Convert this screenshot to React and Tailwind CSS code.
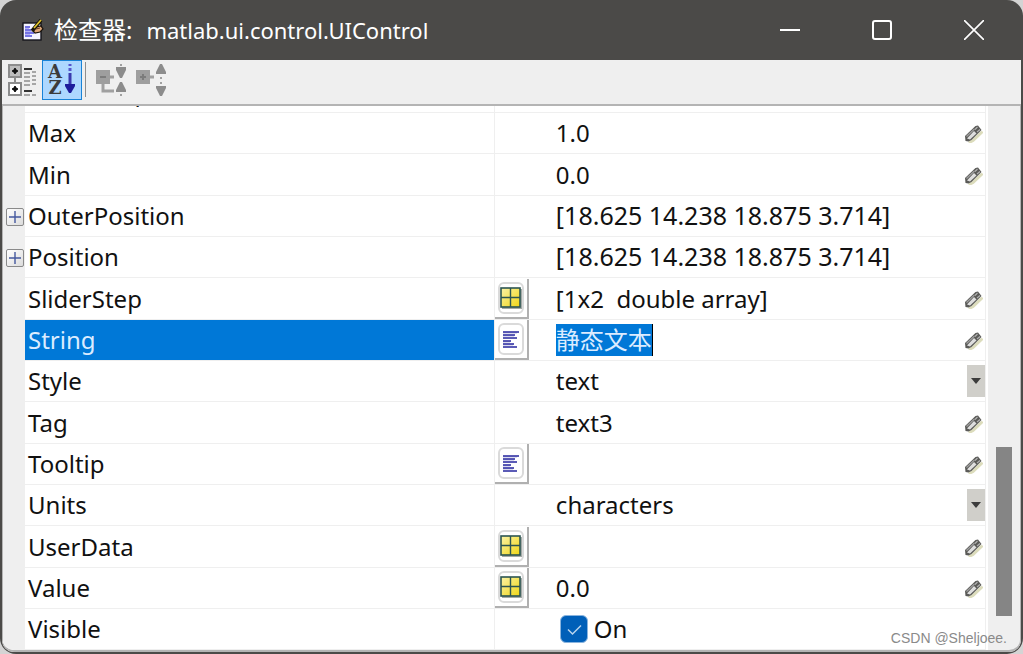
import React, { useState } from "react";

const properties = [
  { name: "ListboxTop", value: "1.0", action: "edit" },
  { name: "Max", value: "1.0", action: "edit" },
  { name: "Min", value: "0.0", action: "edit" },
  { name: "OuterPosition", value: "[18.625 14.238 18.875 3.714]", expand: true },
  { name: "Position", value: "[18.625 14.238 18.875 3.714]", expand: true },
  { name: "SliderStep", value: "[1x2  double array]", editor: "grid", action: "edit" },
  { name: "String", value: "静态文本", type: "text", editor: "lines", action: "edit" },
  { name: "Style", value: "text", type: "select", options: ["text", "edit", "pushbutton"] },
  { name: "Tag", value: "text3", action: "edit" },
  { name: "Tooltip", value: "", editor: "lines", action: "edit" },
  { name: "Units", value: "characters", type: "select", options: ["characters", "pixels", "normalized"] },
  { name: "UserData", value: "", editor: "grid", action: "edit" },
  { name: "Value", value: "0.0", editor: "grid", action: "edit" },
  { name: "Visible", type: "checkbox" },
];

// icons

const AppIcon = () => (
  <svg width="22" height="23" viewBox="0 0 22 23">
    <rect x="1" y="4" width="18" height="17" fill="#f4f4ff" stroke="#15151c" strokeWidth="1.4" />
    <path d="M3 8h5M3 11h6M3 14h9M3 17h7" stroke="#4a48dc" strokeWidth="1.6" />
    <path d="M3 9.5h4M3 12.5h7M3 15.5h5" stroke="#b4b2f4" strokeWidth="1" />
    <path d="M11 12l3-4 5-1 2 3-3 3-5 1z" fill="#e0a878" stroke="#1a130c" strokeWidth="1.2" />
    <path d="M10 12L19 1" stroke="#191508" strokeWidth="3.6" />
    <path d="M12 9L19 1" stroke="#e3c52c" strokeWidth="1.6" />
    <path d="M14 10l4-1" stroke="#6b3f20" strokeWidth="1.2" />
  </svg>
);

const CategoryIcon = () => (
  <svg width="30" height="34" viewBox="0 0 30 34">
    <path d="M7 14v5" stroke="#8c8c8c" strokeWidth="2" />
    <rect x="1" y="1" width="12" height="12" fill="#bdbdbd" stroke="#8c8c8c" strokeWidth="2" />
    <rect x="1" y="19" width="12" height="12" fill="#fff" stroke="#8c8c8c" strokeWidth="2" />
    <path d="M7 4v6M4 7h6M7 22v6M4 25h6" stroke="#444" strokeWidth="2" />
    <path d="M4 7l3-3 3 3-3 3zM4 25l3-3 3 3-3 3z" fill="#111" />
    <path d="M16 5h8M16 27h8" stroke="#333" strokeWidth="2" />
    <path
      d="M16 9h6M16 13h6M16 17h6M16 21h6M16 31h6M24 8h4M24 12h4M24 16h4M24 20h4M24 31h4"
      stroke="#a6a6a6"
      strokeWidth="2"
    />
  </svg>
);

const SortArrow = () => (
  <svg width="12" height="34" viewBox="0 0 12 34">
    <path d="M6 1v2M6 5v3" stroke="#5656cc" strokeWidth="3" />
    <path d="M6 10v12" stroke="#3a3aae" strokeWidth="3" />
    <path d="M1 21h10v2l-4 7h-2l-4-7z" fill="#1d1d9c" />
  </svg>
);

const CollapseIcon = () => (
  <svg width="32" height="34" viewBox="0 0 32 34">
    <rect x="0" y="6" width="14" height="14" fill="#9e9e9e" />
    <path d="M4 13h6" stroke="#7c7c7c" strokeWidth="2" />
    <path d="M14 13h4M7 20v7h11" fill="none" stroke="#a0a0a0" strokeWidth="3" />
    <path d="M25 0v2M25 30v2" stroke="#a0a0a0" strokeWidth="2" />
    <path d="M20 3h10v3l-4 8h-2l-4-8zM20 28h10v-2l-4-8h-2l-4 8z" fill="#8c8c8c" />
  </svg>
);

const ExpandAllIcon = () => (
  <svg width="32" height="34" viewBox="0 0 32 34">
    <rect x="0" y="6" width="14" height="14" fill="#9e9e9e" />
    <path d="M4 13h6M7 10v6" stroke="#7c7c7c" strokeWidth="2" />
    <path d="M14 13h4" stroke="#a0a0a0" strokeWidth="3" />
    <path d="M25 13v2M25 18v2" stroke="#a0a0a0" strokeWidth="2" />
    <path d="M20 10h10v-2l-4-8h-2l-4 8zM20 22h10v2l-4 8h-2l-4-8z" fill="#8c8c8c" />
  </svg>
);

const PencilIcon = () => (
  <svg width="20" height="20" viewBox="0 0 20 20">
    <path d="M7 19l3-1.5L18.5 9.5" fill="none" stroke="#dcdcbc" strokeWidth="3" strokeLinecap="round" />
    <path d="M2 13L12.5 3l2.5-.5L18.5 7 8.5 17 5.5 18.5 2.5 18z" fill="#5a5a57" />
    <path d="M4 15.5l7-7.5 2.500 2.500L7 16.500z" fill="#dedede" />
    <path d="M3.5 13.500L11.500 6" stroke="#a0a0a0" strokeWidth="1.2" />
    <path d="M12 6.5l2.5-2.5M14 9l3-2.5" stroke="#b0b0b0" strokeWidth="1.2" />
  </svg>
);

const GridIcon = () => (
  <svg width="22" height="22" viewBox="0 0 22 22">
    <defs>
      <linearGradient id="cell" x1="0" y1="0" x2="1" y2="1">
        <stop offset="0" stopColor="#fbf3a8" />
        <stop offset="1" stopColor="#efd614" />
      </linearGradient>
    </defs>
    <rect x="2" y="2" width="20" height="20" fill="#a3a9a6" />
    <rect x="1" y="1" width="19" height="19" fill="url(#cell)" stroke="#2c5552" strokeWidth="1.6" />
    <path d="M10.5 1v19M1 10.5h19" stroke="#2c5552" strokeWidth="1.4" />
  </svg>
);

const LinesIcon = () => (
  <svg width="22" height="22" viewBox="0 0 22 22">
    <path d="M3 5h14M3 8h11M3 14h7M3 17h10" stroke="#b9b9e2" strokeWidth="1" />
    <path d="M3 4h16M3 7h12M3 10h14M3 13h8M3 16h11M3 19h14" stroke="#26269e" strokeWidth="1.5" />
  </svg>
);

// value cell

const PropertyValue = ({ item }) => {
  const [value, setValue] = useState(item.value);
  const [checked, setChecked] = useState(true);

  if (item.type === "text") {
    return (
      <input
        type="text"
        aria-label={item.name}
        value={value}
        onChange={(e) => setValue(e.target.value)}
        className="block h-8 field-sizing-content border-r border-black bg-[#0078d7] text-[#dcecff] outline-none"
      />
    );
  }
  if (item.type === "select") {
    return (
      <select
        aria-label={item.name}
        value={value}
        onChange={(e) => setValue(e.target.value)}
        className="block w-full appearance-none bg-transparent outline-none"
      >
        {item.options.map((option) => (
          <option key={option}>{option}</option>
        ))}
      </select>
    );
  }
  if (item.type === "checkbox") {
    return (
      <label className="flex items-center gap-1.5 pl-1">
        <span className="grid">
          <input
            type="checkbox"
            checked={checked}
            onChange={(e) => setChecked(e.target.checked)}
            className="col-start-1 row-start-1 size-7 appearance-none rounded-md border border-[#8ab4de] bg-white checked:bg-[#005fb8]"
          />
          {checked && (
            <svg
              viewBox="0 0 28 28"
              className="pointer-events-none col-start-1 row-start-1 size-7"
              fill="none"
              stroke="#b8d4ee"
              strokeWidth="1.5"
            >
              <path d="M8 14.5l4.5 4.5L21 10.5" />
            </svg>
          )}
        </span>
        On
      </label>
    );
  }
  return <span className={`whitespace-pre ${item.expand ? "text-[25px]" : ""}`}>{value}</span>;
};

const PropertyRow = ({ item }) => {
  const selected = item.name === "String";

  return (
    <tr className="h-[41px] nth-[3n]:h-[42px]">
      <td className="bg-[#efefef] p-0 pr-px">
        {item.expand && (
          <button
            aria-label={`Expand ${item.name}`}
            className="ml-auto flex size-[18px] items-center justify-center rounded-xs border border-[#8a8a8a] bg-linear-to-br from-white to-[#dcdcdc]"
          >
            <svg width="12" height="12" viewBox="0 0 12 12">
              <path d="M6 0v12M0 6h12" stroke="#44589e" strokeWidth="1.4" />
            </svg>
          </button>
        )}
      </td>
      <th
        scope="row"
        className={`border-r border-b border-[#efefef] p-0 pl-[3px] text-left font-normal ${
          selected ? "bg-[#0078d7] text-[#dcecff]" : ""
        }`}
      >
        {item.name}
      </th>
      <td className="border-b border-[#efefef] p-0">
        {item.editor && (
          <button
            aria-label={`Open ${item.name} editor`}
            className="flex h-10 w-[34px] items-center justify-center border-r-2 border-b-2 border-[#b0b0b0] bg-white"
          >
            <span className="flex h-8 w-[26px] items-center justify-center rounded-md border-2 border-[#dadada]">
              {item.editor === "grid" ? <GridIcon /> : <LinesIcon />}
            </span>
          </button>
        )}
      </td>
      <td className="border-b border-[#efefef] p-0 pl-[25px]">
        <PropertyValue item={item} />
      </td>
      <td className="border-r border-b border-[#efefef] p-0">
        {item.action === "edit" && (
          <button aria-label={`Edit ${item.name}`} className="ml-auto flex pr-0.5">
            <PencilIcon />
          </button>
        )}
        {item.type === "select" && (
          <button
            aria-label={`Show ${item.name} options`}
            className="ml-auto flex h-8 w-[18px] items-center justify-center bg-[#d0cfca]"
          >
            <svg width="10" height="6" viewBox="0 0 10 6">
              <path d="M0 0h10l-5 6z" fill="#3c3c3c" />
            </svg>
          </button>
        )}
      </td>
    </tr>
  );
};

const App = () => {
  return (
    <div className="h-screen bg-[#d4d4d4] font-['Noto_Sans','Noto_Sans_CJK_SC',sans-serif] text-2xl text-[#111]">
      <main className="relative flex h-full flex-col overflow-hidden rounded-2xl bg-[#4b4a48]">
        <header className="flex h-15 shrink-0 items-center pl-[22px] text-white">
          <AppIcon />
          <h1 className="ml-2.5 flex flex-1 items-baseline gap-3.5">
            检查器: <span className="text-[22px]">matlab.ui.control.UIControl</span>
          </h1>
          <div className="flex gap-18 pr-[39px]">
            <button aria-label="Minimize">
              <svg width="20" height="20" viewBox="0 0 20 20">
                <path d="M0 10h20" stroke="#fff" strokeWidth="2" />
              </svg>
            </button>
            <button aria-label="Maximize">
              <svg width="20" height="20" viewBox="0 0 20 20">
                <rect x="1" y="1" width="18" height="18" rx="2" fill="none" stroke="#fff" strokeWidth="2" />
              </svg>
            </button>
            <button aria-label="Close">
              <svg width="20" height="20" viewBox="0 0 20 20">
                <path d="M0 0l20 20M20 0L0 20" stroke="#fff" strokeWidth="1.6" />
              </svg>
            </button>
          </div>
        </header>

        <div className="mx-0.5 mb-0.5 flex min-h-0 flex-1 flex-col overflow-hidden rounded-b-xl bg-[#efefef]">
          <div className="flex h-[46px] shrink-0 items-start border-b-2 border-[#b4b4b4] pl-1.5">
            <button aria-label="Group by category" className="mt-1">
              <CategoryIcon />
            </button>
            <button
              aria-label="Sort alphabetically"
              className="ml-1 flex size-10 items-center justify-center gap-0.5 border border-[#1883d7] bg-[#add8ff]"
            >
              <span className="flex flex-col items-center font-['DejaVu_Serif',serif] text-lg/4 font-bold text-[#3c3c3c]">
                <span>A</span>
                <span>Z</span>
              </span>
              <SortArrow />
            </button>
            <span className="mt-0.5 ml-[3px] h-[35px] w-px bg-[#8e8e8e]" />
            <button aria-label="Collapse all" className="mt-1 ml-2.5">
              <CollapseIcon />
            </button>
            <button aria-label="Expand all" className="mt-1 ml-2">
              <ExpandAllIcon />
            </button>
          </div>

          <div className="flex min-h-0 flex-1 overflow-hidden rounded-b-xl border-x border-b-2 border-[#b4b4b4]">
            <div className="flex min-w-0 flex-1 flex-col justify-end overflow-hidden bg-white pr-0.5">
              <table className="w-full shrink-0 table-fixed border-separate border-spacing-0">
                <colgroup>
                  <col className="w-[22px]" />
                  <col className="w-[47.8%]" />
                  <col className="w-9" />
                  <col />
                  <col className="w-6" />
                </colgroup>
                <tbody>
                  {properties.map((item) => (
                    <PropertyRow key={item.name} item={item} />
                  ))}
                </tbody>
              </table>
            </div>
            {/* scrollbar */}
            <div className="flex w-8 flex-col justify-end px-2 pb-[34px]">
              <div className="h-[169px] bg-[#858585]" />
            </div>
          </div>
        </div>

        <p className="absolute right-4 bottom-1.5 font-['Liberation_Sans',sans-serif] text-sm text-[#8a8a8a]">
          CSDN @Sheljoee.
        </p>
      </main>
    </div>
  );
};

export default App;
